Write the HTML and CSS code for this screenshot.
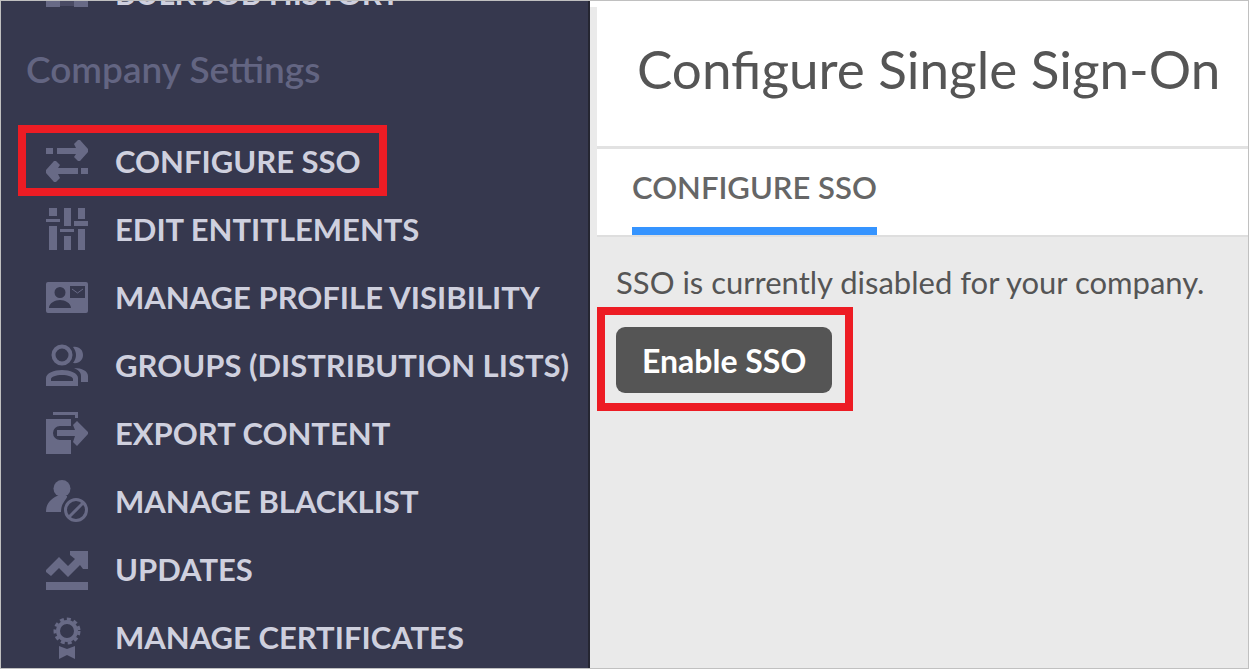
FILE: index.html
```html
<!DOCTYPE html>
<html lang="en">
<head>
<meta charset="utf-8">
<title>Configure Single Sign-On</title>
<link rel="stylesheet" href="styles.css">
</head>
<body>
<div class="app">
  <nav class="sidebar" aria-label="Administration">
    <ul class="menu menu-previous">
      <li><a class="item" href="#history">
        <svg class="icon" viewBox="0 0 42 42" aria-hidden="true"><path d="M0 4h42v31H28v-8H14v8H0z"/><path d="M14 27h14v7H14z" opacity=".4"/></svg>
        BULK JOB HISTORY</a></li>
    </ul>
    <h2 class="group">Company Settings</h2>
    <ul class="menu">
      <li><a class="item highlight" href="#sso">
        <svg class="icon" viewBox="0 0 42 42" aria-hidden="true"><path d="M0 8h7v6H0zM11 8h19l-2-4 4-4h2l8 9v3l-8 9h-2l-4-4 2-3H11zM35 28h7v6h-7zM32 28H12l2-3-4-4H8L0 30v3l8 9h2l4-4-2-4h20z"/></svg>
        CONFIGURE SSO</a></li>
      <li><a class="item" href="#entitlements">
        <svg class="icon" viewBox="0 0 42 42" aria-hidden="true"><path d="M3 0h8v8H3zM0 11h14v3H0zM3 18h8v24H3zM18 0h7v18h-7zM14 21h14v3H14zM18 28h7v14h-7zM32 0h7v11h-7zM28 13h14v5H28zM32 21h7v21h-7z"/></svg>
        EDIT ENTITLEMENTS</a></li>
      <li><a class="item" href="#visibility">
        <svg class="icon" viewBox="0 0 42 42" aria-hidden="true"><path fill-rule="evenodd" d="M2 6h38q2 0 2 2v27q0 2-2 2H2q-2 0-2-2V8q0-2 2-2zM14 11a5.500 5.500 0 1 0 0 11 5.500 5.500 0 1 0 0-11zM3 32h22c0-5-6-8-11-8S3 27 3 32zM24 10v12h15V10z"/><path d="M26 13l5.500 4 5.500-4" class="line-thin"/></svg>
        MANAGE PROFILE VISIBILITY</a></li>
      <li><a class="item" href="#groups">
        <svg class="icon" viewBox="0 0 42 42" aria-hidden="true"><circle cx="16" cy="11" r="8.500" class="line"/><path d="M27 3c6-1 10 3 10 8s-4 9-10 8c4-5 4-11 0-16z"/><path fill-rule="evenodd" d="M0 42v-8c0-5 8-8 16-8s16 3 16 8v8zM5 37h22v-2c0-2-5-4-11-4S5 33 5 35z"/><path d="M28 24c8 0 14 3 14 8v6h-7v-6c0-4-3-6-7-8z"/></svg>
        GROUPS (DISTRIBUTION LISTS)</a></li>
      <li><a class="item" href="#export">
        <svg class="icon" viewBox="0 0 42 42" aria-hidden="true"><path d="M7 0h25v6h-3V3H7zM0 7h25v7H14a7 7 0 0 0 0 14h11v14H0zM11 18h18l-2-5 4-4 11 11v2L31 34l-4-4 2-6H11z"/></svg>
        EXPORT CONTENT</a></li>
      <li><a class="item" href="#blacklist">
        <svg class="icon" viewBox="0 0 42 42" aria-hidden="true"><circle cx="16" cy="8.500" r="8.500"/><path d="M0 32c0-9 5-13 11-16h10c1 3-6 6-6 16z"/><circle cx="30" cy="30" r="10.500" class="line-mid"/><path d="M23 37l14-14" class="line-mid"/></svg>
        MANAGE BLACKLIST</a></li>
      <li><a class="item" href="#updates">
        <svg class="icon" viewBox="0 0 42 42" aria-hidden="true"><path d="M0 34h42v8H0zM24 3h18v18h-5l-3-4-12 12-9-9-8 8-5-4v-2l13-13 9 9 7-7-5-4z"/></svg>
        UPDATES</a></li>
      <li><a class="item" href="#certificates">
        <svg class="icon" viewBox="0 0 42 42" aria-hidden="true"><circle cx="21" cy="15" r="9" class="line"/><circle cx="21" cy="15" r="12" class="teeth"/><path d="M13 30l8 3 8-3v13l-8-4-8 4z"/></svg>
        MANAGE CERTIFICATES</a></li>
    </ul>
  </nav>
  <main class="main">
    <header class="header"><h1 class="title">Configure Single Sign-On</h1></header>
    <div class="tabs"><a class="tab" href="#sso">CONFIGURE SSO</a></div>
    <section class="content">
      <p class="status">SSO is currently disabled for your company.</p>
      <div class="action"><button class="button" type="button">Enable SSO</button></div>
    </section>
  </main>
</div>
</body>
</html>
```
FILE: styles.css
```css
*, ::after { box-sizing: border-box; }

body {
  margin: 0;
  font-family: Lato, "Open Sans", sans-serif;
  color: #555;
}

.app {
  display: grid;
  grid-template-columns: 589px 1fr;
  height: 100vh;
  overflow: hidden;
  border: 1px solid #c0c0c0;
  background: #eaeaea;
}

.sidebar {
  min-height: 0;
  overflow: hidden;
  background: #36384e;
  border-right: 2px solid #252632;
}

.menu {
  margin: 0;
  padding: 0;
  list-style: none;
}

.menu-previous { margin-top: -42px; }

.item {
  position: relative;
  display: flex;
  align-items: center;
  gap: 27px;
  height: 68px;
  padding-left: 45px;
  font-size: 31px;
  font-weight: 700;
  white-space: nowrap;
  color: #cfd0de;
  text-decoration: none;
}

.icon {
  flex: none;
  width: 42px;
  height: 42px;
  overflow: visible;
  fill: #686a86;
}

.line, .line-mid, .line-thin, .teeth {
  fill: none;
  stroke: #686a86;
}

.line { stroke-width: 4; }
.line-mid { stroke-width: 3; }
.line-thin { stroke-width: 1; }
.teeth { stroke-width: 3; stroke-dasharray: 4 3; }

.highlight::after {
  content: "";
  position: absolute;
  inset: -2px auto -1px 17px;
  width: 369px;
  border: 8px solid #ed1c24;
}

.group {
  margin: 0;
  padding: 22px 25px 38px;
  font-family: "Lato Semibold", "Lato Medium", Lato, sans-serif;
  font-size: 37px;
  line-height: 40px;
  font-weight: 600;
  color: #636582;
}

.main {
  display: flex;
  flex-direction: column;
  min-width: 0;
  padding-left: 7px;
  background: linear-gradient(#fff 6px, transparent 6px);
}

.header {
  padding: 36px 20px 45px 40px;
  background: #fff;
  border-bottom: 3px solid #e2e2e2;
}

.title {
  margin: 0;
  font-size: 53px;
  line-height: 64px;
  font-weight: 400;
  white-space: nowrap;
}

.tabs {
  display: flex;
  padding: 0 35px;
  background: #fff;
  border-bottom: 2px solid #dedede;
}

.tab {
  padding: 18px 0 20px;
  border-bottom: 8px solid #3594ff;
  font-family: "Lato Semibold", "Lato Medium", Lato, sans-serif;
  font-size: 31px;
  line-height: 40px;
  font-weight: 600;
  color: #666;
  text-decoration: none;
}

.content { padding: 25px 0; }

.status {
  margin: 0;
  padding-left: 19px;
  font-size: 31px;
  line-height: 40px;
  white-space: nowrap;
}

.action {
  width: fit-content;
  margin-top: 5px;
  padding: 12px 13px 10px 11px;
  border: 8px solid #ed1c24;
}

.button {
  height: 66px;
  padding: 0 26px;
  border: 0;
  border-radius: 9px;
  background: #555;
  color: #fff;
  font: 700 32px Lato, "Open Sans", sans-serif;
}
```
